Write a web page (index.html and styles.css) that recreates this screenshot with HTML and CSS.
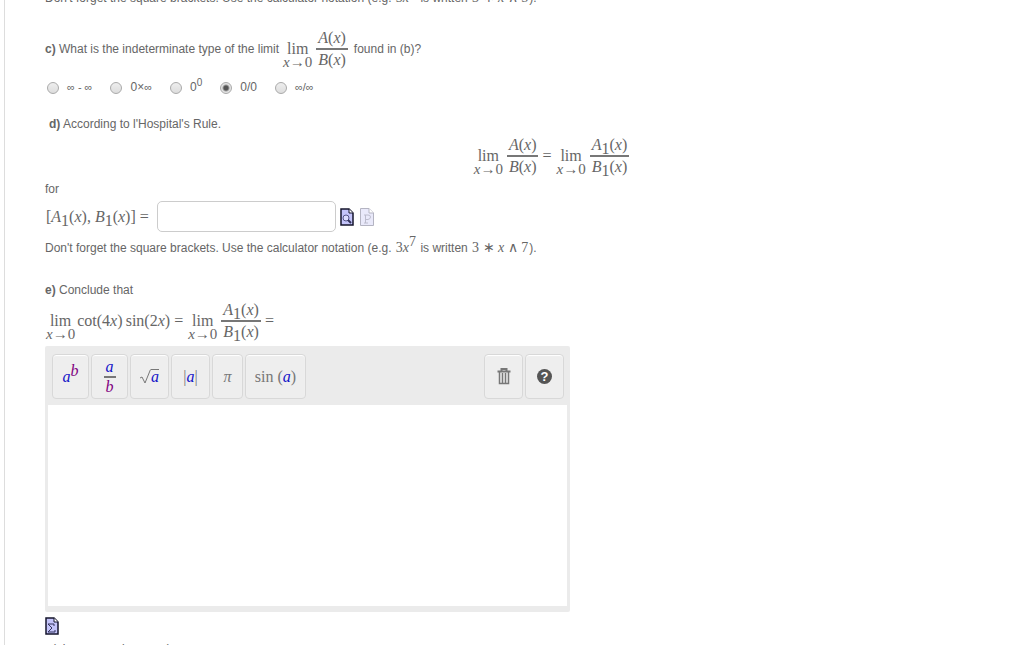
FILE: index.html
```
<!DOCTYPE html>
<html lang="en">
<head>
    <meta charset="utf-8">
    <title>l'Hospital's Rule</title>
    <link rel="stylesheet" href="styles.css">
</head>
<body>
    <main class="question">
        <p class="hint first">Don't forget the square brackets. Use the calculator notation (e.g. <span class="math">3<i>x</i><sup>5</sup></span> is written <span class="math">3 ∗ <i>x</i> ∧ 5</span>).</p>

        <div class="line part-c">
            <span><b>c)</b> What is the indeterminate type of the limit</span>
            <span class="math">
                <span class="lim">lim<small><i>x</i>→0</small></span>
                <span class="frac"><span><i>A</i>(<i>x</i>)</span><span><i>B</i>(<i>x</i>)</span></span>
            </span>
            <span>found in (b)?</span>
        </div>

        <div class="choices">
            <label><input type="radio" name="type"><span class="inf">∞ - ∞</span></label>
            <label><input type="radio" name="type"><span>0×<span class="inf">∞</span></span></label>
            <label><input type="radio" name="type"><span>0<sup>0</sup></span></label>
            <label><input type="radio" name="type" checked><span>0/0</span></label>
            <label><input type="radio" name="type"><span class="inf">∞/∞</span></label>
        </div>

        <p class="part-d"><b>d)</b> According to l'Hospital's Rule.</p>

        <div class="display math">
            <span class="lim">lim<small><i>x</i>→0</small></span>
            <span class="frac"><span><i>A</i>(<i>x</i>)</span><span><i>B</i>(<i>x</i>)</span></span>
            <span class="rel">=</span>
            <span class="lim">lim<small><i>x</i>→0</small></span>
            <span class="frac"><span><i>A</i><sub>1</sub>(<i>x</i>)</span><span><i>B</i><sub>1</sub>(<i>x</i>)</span></span>
        </div>

        <p class="for">for</p>

        <div class="line answer">
            <label class="math" for="answer"><span>[<i>A</i><sub>1</sub>(<i>x</i>), <i>B</i><sub>1</sub>(<i>x</i>)] =</span></label>
            <input type="text" id="answer">
            <button class="icon" aria-label="Preview">
                <svg width="14" height="18" viewBox="0 0 14 18">
                    <path d="M1 1h8l4 4v12H1z" fill="#c4c4fa" stroke="#15152c" stroke-width="1.5"/>
                    <path d="M9 1v4h4" fill="#fff" stroke="#15152c"/>
                    <circle cx="6" cy="10" r="3" fill="#dcdcff" stroke="#55558a"/>
                    <path d="M8 12l3 3" stroke="#33335c" stroke-width="2"/>
                </svg>
            </button>
            <button class="icon" aria-label="Plot" disabled>
                <svg width="14" height="18" viewBox="0 0 14 18">
                    <path d="M.5.5H9L13.5 5v12.5H.5z" fill="#e9e9fa" stroke="#b4b4c2"/>
                    <path d="M9 .5V5h4.5" fill="#fff" stroke="#b4b4c2"/>
                    <path d="M4 15h4M5.5 15V7M4 7h4q2.5 0 2.5 2t-2.5 2.5H6" fill="none" stroke="#bcbccd"/>
                </svg>
            </button>
        </div>

        <p class="hint">Don't forget the square brackets. Use the calculator notation (e.g. <span class="math">3<i>x</i><sup>7</sup></span> is written <span class="math">3 ∗ <i>x</i> ∧ 7</span>).</p>

        <p class="part-e"><b>e)</b> Conclude that</p>

        <div class="math conclusion">
            <span class="lim">lim<small><i>x</i>→0</small></span>
            <span>cot(4<i>x</i>)&thinsp;sin(2<i>x</i>)</span>
            <span class="rel">=</span>
            <span class="lim">lim<small><i>x</i>→0</small></span>
            <span class="frac"><span><i>A</i><sub>1</sub>(<i>x</i>)</span><span><i>B</i><sub>1</sub>(<i>x</i>)</span></span>
            <span class="rel">=</span>
        </div>

        <div class="editor">
            <div class="toolbar">
                <button class="w-m"><span><i class="a">a</i><sup class="b"><i>b</i></sup></span></button>
                <button class="w-m"><span class="frac"><i class="a">a</i><i class="b">b</i></span></button>
                <button class="w-l">
                    <svg width="11" height="15" viewBox="0 0 11 15"><path d="M0 9l2-1 3 6L10.5.5" fill="none" stroke="#777"/></svg><span class="radicand"><i class="a">a</i></span>
                </button>
                <button class="w-l"><span>|<i class="a">a</i>|</span></button>
                <button class="w-s"><i>π</i></button>
                <button class="w-xl"><span>sin (<i class="a">a</i>)</span></button>
                <button class="w-l clear" aria-label="Clear">
                    <svg width="14" height="17" viewBox="0 0 14 17" fill="none" stroke="#777">
                        <path d="M.5 3.5h13M4.5 3V1h5v2" stroke-width="2"/>
                        <path d="M2.5 4v11.5h9V4M5.5 5v10M8.5 5v10" stroke-width="1.5"/>
                    </svg>
                </button>
                <button class="w-l" aria-label="Help"><span class="help">?</span></button>
            </div>
            <textarea aria-label="Equation"></textarea>
        </div>

        <button class="icon sigma" aria-label="Show equation">
            <svg width="14" height="18" viewBox="0 0 14 18">
                <path d="M1 1h8l4 4v12H1z" fill="#c4c4fa" stroke="#15152c" stroke-width="1.5"/>
                <path d="M9 1v4h4" fill="#fff" stroke="#15152c"/>
                <path d="M9 9V7H3l4 4-4 4h7v-2" fill="none" stroke="#33335c"/>
            </svg>
        </button>

        <p class="last">(give one end answer)</p>
    </main>
</body>
</html>
```

FILE: styles.css
```
* {
    box-sizing: border-box;
}

body {
    margin: 0;
    height: 100vh;
    overflow: hidden;
    background: #fff;
    color: #666;
    font: 12px/20px "Liberation Sans", Arial, sans-serif;
}

.question {
    margin-left: 4px;
    padding-left: 40px;
    border-left: 1px solid #ddd;
    min-height: 100vh;
}

p {
    margin: 0;
}

sup,
sub {
    font-size: 1em;
    line-height: 0;
}

/* Formulas */
.math {
    font-family: "Liberation Serif", "Times New Roman", serif;
    font-size: 16px;
}

.line,
.line .math,
.display,
.conclusion {
    display: flex;
    align-items: center;
}

.lim {
    display: inline-flex;
    flex-direction: column;
    align-items: center;
    margin: 0 2px 0 1px;
    padding-top: 12px;
    line-height: 14px;
}

.lim small {
    font-size: 15px;
    line-height: 12px;
}

.frac {
    display: inline-flex;
    flex-direction: column;
    align-items: center;
    margin-left: 2px;
}

.frac > :first-child {
    border-bottom: 2px solid #777;
    padding: 0 2px;
    line-height: 20px;
}

.frac > :last-child {
    line-height: 20px;
}

.rel {
    margin: 0 4px;
}

.hint {
    line-height: 20px;
    white-space: nowrap;
}

.hint .math {
    font-size: 14px;
    margin: 0 1px;
}

.first {
    margin-top: -12px;
}

.part-c {
    margin-top: 20px;
}

.part-c > .math {
    margin: 0 6px 0 3px;
}

.choices {
    display: flex;
    gap: 16px;
    margin-top: 7px;
}

.choices label {
    display: flex;
    align-items: center;
    gap: 8px;
}

.choices sup {
    font-size: 10px;
}

.inf {
    font-size: 11px;
}

input[type="radio"] {
    appearance: none;
    width: 12px;
    height: 12px;
    margin: 2px 0 0 2px;
    border: 1px solid #aaa;
    border-radius: 50%;
    background: linear-gradient(#eee, #ddd);
}

input[type="radio"]:checked {
    background: radial-gradient(circle, #555 2px, #e4e4e4 4px);
}

.part-d {
    margin: 17px 0 0 4px;
}

.display {
    justify-content: center;
    margin-top: 1px;
    padding-left: 33px;
}

.for {
    margin-top: 2px;
}

.answer {
    margin-top: 2px;
}

.answer label {
    padding-left: 1px;
}

#answer {
    width: 179px;
    height: 31px;
    margin: 0 4px 0 8px;
    padding: 4px 8px;
    border: 1px solid #ccc;
    border-radius: 5px;
    font: inherit;
}

.icon {
    display: block;
    padding: 0;
    border: 0;
    background: none;
}

.icon svg {
    display: block;
}

.icon + .icon {
    margin-left: 6px;
}

.answer + .hint {
    margin-top: 6px;
}

.part-e {
    margin-top: 22px;
}

/* Equation editor */
.editor {
    width: 525px;
    max-width: 100%;
    background: #ebebeb;
    border-radius: 2px;
    margin-top: 4px;
    padding: 0 3px 6px;
}

.toolbar {
    display: flex;
    gap: 2px;
    padding: 8px 3px 6px 4px;
}

.toolbar button {
    display: flex;
    justify-content: center;
    align-items: center;
    height: 45px;
    padding: 0;
    border: 1px solid #d8d8d8;
    border-radius: 4px;
    background: #eee;
    box-shadow: inset 0 1px 1px #fff;
    color: #777;
    font: 16px/20px "Liberation Serif", "Times New Roman", serif;
}

.toolbar .w-s {
    width: 31px;
}

.toolbar .w-m {
    width: 37px;
}

.toolbar .w-l {
    width: 39px;
}

.toolbar .w-xl {
    width: 61px;
}

.toolbar .clear {
    margin-left: auto;
}

.toolbar .frac {
    margin: 0;
}

.toolbar .frac > * {
    line-height: 18px;
}

.a {
    color: #1414c8;
}

.b {
    color: #800080;
}

.radicand {
    border-top: 1px solid #777;
    line-height: 14px;
}

.help {
    width: 15px;
    height: 15px;
    border-radius: 50%;
    background: #555;
    color: #fff;
    font: bold 13px/15px "Liberation Sans", Arial, sans-serif;
}

textarea {
    display: block;
    width: 100%;
    height: 201px;
    border: 0;
    padding: 6px;
    resize: none;
    background: #fff;
}

.sigma {
    margin-top: 5px;
}

.last {
    margin: 4px 0 0 7px;
}
```
